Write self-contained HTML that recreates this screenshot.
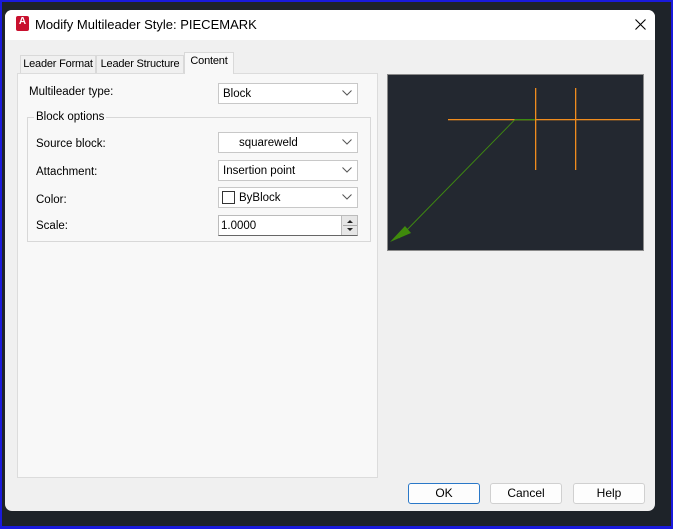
<!DOCTYPE html>
<html><head><style>
*{margin:0;padding:0;box-sizing:border-box}
body{width:673px;height:529px;background:#1a1adc;position:relative;overflow:hidden;font-family:"Liberation Sans",sans-serif;font-size:12px;color:#000}
.abs{position:absolute}
.bg{left:2px;top:2px;width:669px;height:524px;background:#1e2329}
.dlg{left:5px;top:10px;width:650px;height:501px;background:#f0f0f0;border-radius:7px;overflow:hidden}
.title{left:0;top:0;width:650px;height:30px;background:#fff}
.tab{height:18px;border:1px solid #d9d9d9;border-bottom:none;background:#f0f0f0;font-size:11px;letter-spacing:-0.2px;line-height:17px;text-align:center;white-space:nowrap;overflow:hidden}
.panel{left:12px;top:63px;width:361px;height:405px;background:#f8f8f8;border:1px solid #dcdcdc}
.cb{position:absolute;left:213px;width:140px;height:21px;background:#fff;border:1px solid #c8c8c8;font-size:11.5px;line-height:20px;padding-left:4px;white-space:nowrap}
.cb svg{position:absolute;right:5px;top:6px}
.lbl{position:absolute;font-size:11.5px;white-space:nowrap}
.btn{position:absolute;top:473px;height:21px;width:72px;background:#fdfdfd;border:1px solid #d0d0d0;border-radius:3px;text-align:center;line-height:19px;font-size:12px}
</style></head><body>
<div class="abs bg"></div>
<div class="abs dlg">
 <div class="abs title"></div>
 <div class="abs" style="left:11px;top:6px;width:13px;height:15px;background:#c8102e;border-radius:2px;color:#fff;font-size:10px;font-weight:bold;text-align:center;line-height:11px">A</div>
 <div class="abs" style="left:30px;top:7px;font-size:13px">Modify Multileader Style: PIECEMARK</div>
 <svg class="abs" style="left:630px;top:9px" width="11" height="11"><path d="M0.5 0.5L10.5 10.5M10.5 0.5L0.5 10.5" stroke="#000" stroke-width="1.1"/></svg>
 <div class="abs panel">
  <div class="lbl" style="left:11px;top:12px">Multileader type:</div>
  <div class="cb" style="top:9px;left:200px">Block<svg width="10" height="6"><path d="M0.5 0.5L5 5L9.5 0.5" fill="none" stroke="#555"/></svg></div>
  <div class="abs" style="left:9px;top:43px;width:344px;height:125px;border:1px solid #d8d8d8"></div>
  <div class="lbl" style="left:16px;top:37px;background:#f8f8f8;padding:0 2px">Block options</div>
  <div class="lbl" style="left:18px;top:64px">Source block:</div>
  <div class="cb" style="top:58px;left:200px;padding-left:20px">squareweld<svg width="10" height="6"><path d="M0.5 0.5L5 5L9.5 0.5" fill="none" stroke="#555"/></svg></div>
  <div class="lbl" style="left:18px;top:92px">Attachment:</div>
  <div class="cb" style="top:86px;left:200px">Insertion point<svg width="10" height="6"><path d="M0.5 0.5L5 5L9.5 0.5" fill="none" stroke="#555"/></svg></div>
  <div class="lbl" style="left:18px;top:120px">Color:</div>
  <div class="cb" style="top:113px;left:200px;padding-left:20px"><span style="position:absolute;left:3px;top:3px;width:13px;height:13px;border:1px solid #333"></span>ByBlock<svg width="10" height="6"><path d="M0.5 0.5L5 5L9.5 0.5" fill="none" stroke="#555"/></svg></div>
  <div class="lbl" style="left:18px;top:146px">Scale:</div>
  <div class="cb" style="top:141px;left:200px;border-color:#bbb;border-bottom:1px solid #666;padding-left:2px">1.0000
   <div style="position:absolute;right:0;top:0;width:16px;height:19px;background:#e6e6e6;border-left:1px solid #bbb">
    <svg width="16" height="19" style="position:absolute;left:0;top:0;right:auto"><path d="M5 7L8 4L11 7Z M5 12L8 15L11 12Z" fill="#222"/><path d="M1 9.5H15" stroke="#aaa"/></svg>
   </div></div>
 </div>
 <div class="abs tab" style="left:15px;top:45px;width:76px">Leader Format</div>
 <div class="abs tab" style="left:91px;top:45px;width:88px">Leader Structure</div>
 <div class="abs tab" style="left:179px;top:42px;width:50px;height:22px;background:#f8f8f8;line-height:17px">Content</div>
 <svg class="abs" style="left:382px;top:64px" width="257" height="177">
  <rect x="0.5" y="0.5" width="256" height="176" fill="#232830" stroke="#8a8a8a"/>
  <rect x="61" y="45" width="192" height="1.3" fill="#f08c1e"/>
  <rect x="148" y="14" width="1.3" height="82" fill="#f08c1e"/>
  <rect x="188" y="14" width="1.3" height="82" fill="#f08c1e"/>
  <rect x="128" y="45" width="20" height="1.3" fill="#3a8a10"/>
  <path d="M128 45.5L12 164" stroke="#3f8c10" stroke-width="0.9"/>
  <path d="M3 168L18 152L24 159Z" fill="#3f8a0c"/>
 </svg>
 <div class="btn" style="left:403px;border-color:#2a78c8">OK</div>
 <div class="btn" style="left:485px">Cancel</div>
 <div class="btn" style="left:568px">Help</div>
</div>
</body></html>
